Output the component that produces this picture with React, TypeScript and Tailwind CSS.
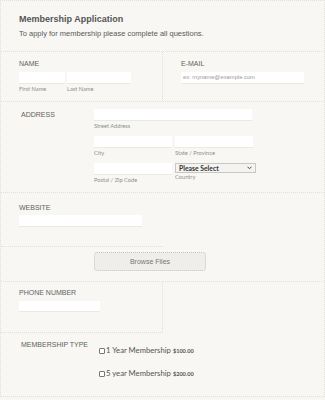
import React from "react";

const lato = "font-['Lato','Liberation_Sans',sans-serif]";

function Input({ w, h = "h-[12px]", children }: { w: string; h?: string; children?: React.ReactNode }) {
  return (
    <div className={`${w} ${h} bg-white border-b border-solid border-[#ebe9e3] flex items-center`}>{children}</div>
  );
}

function Sub({ children, w }: { children: React.ReactNode; w?: string }) {
  return (
    <div className={`${lato} ${w ?? ""} text-[5.7px] leading-[6px] h-[6px] text-[#8f8f8f] mt-[2px] whitespace-nowrap`}>{children}</div>
  );
}

function Label({ children }: { children: React.ReactNode }) {
  return <div className="text-[7px] leading-none text-[#626262] whitespace-nowrap">{children}</div>;
}

export default function App() {
  return (
    <div className="w-[325px] h-[400px] bg-[#f8f7f4] overflow-hidden font-['Liberation_Sans',Arial,sans-serif] text-[#555]">
      <div className="border-l border-t border-r border-dotted border-[#e2e0da]">
        {/* Header */}
        <div className="h-[51px] border-b border-dotted border-[#e2e0da] pl-[18px] pt-[14px]">
          <div className="text-[9px] font-bold leading-none text-[#555]">Membership Application</div>
          <div className="text-[7.5px] leading-none mt-[6px] text-[#5a5a5a]">
            To apply for membership please complete all questions.
          </div>
        </div>

        {/* Name / Email */}
        <div className="flex h-[50px] border-b border-dotted border-[#e2e0da]">
          <div className="w-[162px] border-r border-dotted border-[#e2e0da] pl-[18px] pt-[8px]">
            <Label>NAME</Label>
            <div className="flex gap-[2px] mt-[5px]">
              <div>
                <Input w="w-[46px]" />
                <Sub>First Name</Sub>
              </div>
              <div>
                <Input w="w-[64px]" />
                <Sub>Last Name</Sub>
              </div>
            </div>
          </div>
          <div className="flex-1 pl-[18px] pt-[8px]">
            <Label>E-MAIL</Label>
            <div className="mt-[5px]">
              <Input w="w-[123px]">
                <span className="pl-[2px] text-[5.8px] leading-none text-[#999]">ex: myname@example.com</span>
              </Input>
            </div>
          </div>
        </div>

        {/* Address */}
        <div className="flex h-[91px] border-b border-dotted border-[#e2e0da]">
          <div className="w-[93px] pl-[20px] pt-[9px]">
            <Label>ADDRESS</Label>
          </div>
          <div className="pt-[7px] flex flex-col gap-[7px]">
            <div>
              <Input w="w-[158px]" />
              <Sub>Street Address</Sub>
            </div>
            <div className="flex gap-[3px]">
              <div>
                <Input w="w-[78px]" />
                <Sub>City</Sub>
              </div>
              <div>
                <Input w="w-[78px]" />
                <Sub>State / Province</Sub>
              </div>
            </div>
            <div className="flex gap-[3px]">
              <div>
                <Input w="w-[78px]" />
                <Sub>Postal / Zip Code</Sub>
              </div>
              <div>
                <div className="w-[81px] h-[10px] bg-[#f4f3ef] border border-solid border-[#c9c7c1] flex items-center justify-between pl-[3px] pr-[3px]">
                  <span className={`${lato} text-[6.8px] font-bold leading-none text-[#333]`}>Please Select</span>
                  <svg width="5" height="4" viewBox="0 0 10 7">
                    <path d="M1 1l4 4 4-4" stroke="#444" strokeWidth="2" fill="none" />
                  </svg>
                </div>
                <div className={`${lato} text-[5.7px] leading-[6px] h-[6px] text-[#8f8f8f] mt-[1px]`}>Country</div>
              </div>
            </div>
          </div>
        </div>

        {/* Website */}
        <div className="w-[162px] h-[54px] border-b border-dotted border-[#e2e0da] pl-[18px] pt-[11px]">
          <Label>WEBSITE</Label>
          <div className="mt-[4px]">
            <Input w="w-[123px]" />
          </div>
        </div>

        {/* Upload */}
        <div className="h-[35px] border-b border-dotted border-[#e2e0da] pl-[93px] pt-[5px]">
          <div className="w-[112px] h-[19px] rounded-[3px] border border-dotted border-[#c8c6c0] bg-[#efeeea] flex items-center justify-center">
            <span className="text-[7px] leading-none text-[#777]">Browse Files</span>
          </div>
        </div>

        {/* Phone */}
        <div className="w-[162px] h-[51px] border-b border-r border-dotted border-[#e2e0da] pl-[18px] pt-[7px]">
          <Label>PHONE NUMBER</Label>
          <div className="mt-[5px]">
            <Input w="w-[81px]" h="h-[11px]" />
          </div>
        </div>

        {/* Membership */}
        <div className="flex h-[64px] border-b border-dotted border-[#e2e0da]">
          <div className="w-[98px] pl-[20px] pt-[8px]">
            <Label>MEMBERSHIP TYPE</Label>
          </div>
          <div className="pt-[14px] flex flex-col gap-[15px]">
            <div className="flex items-center">
              <div className="w-[6px] h-[6px] border border-solid border-[#777] rounded-[1px] bg-white" />
              <span className={`${lato} text-[7.7px] leading-none text-[#555] ml-[1px]`}>1 Year Membership</span>
              <span className={`${lato} text-[5.6px] font-bold leading-none text-[#555] ml-[2px]`}>$100.00</span>
            </div>
            <div className="flex items-center">
              <div className="w-[6px] h-[6px] border border-solid border-[#777] rounded-[1px] bg-white" />
              <span className={`${lato} text-[7.7px] leading-none text-[#555] ml-[1px]`}>5 year Membership</span>
              <span className={`${lato} text-[5.6px] font-bold leading-none text-[#555] ml-[2px]`}>$200.00</span>
            </div>
          </div>
        </div>
      </div>
    </div>
  );
}
